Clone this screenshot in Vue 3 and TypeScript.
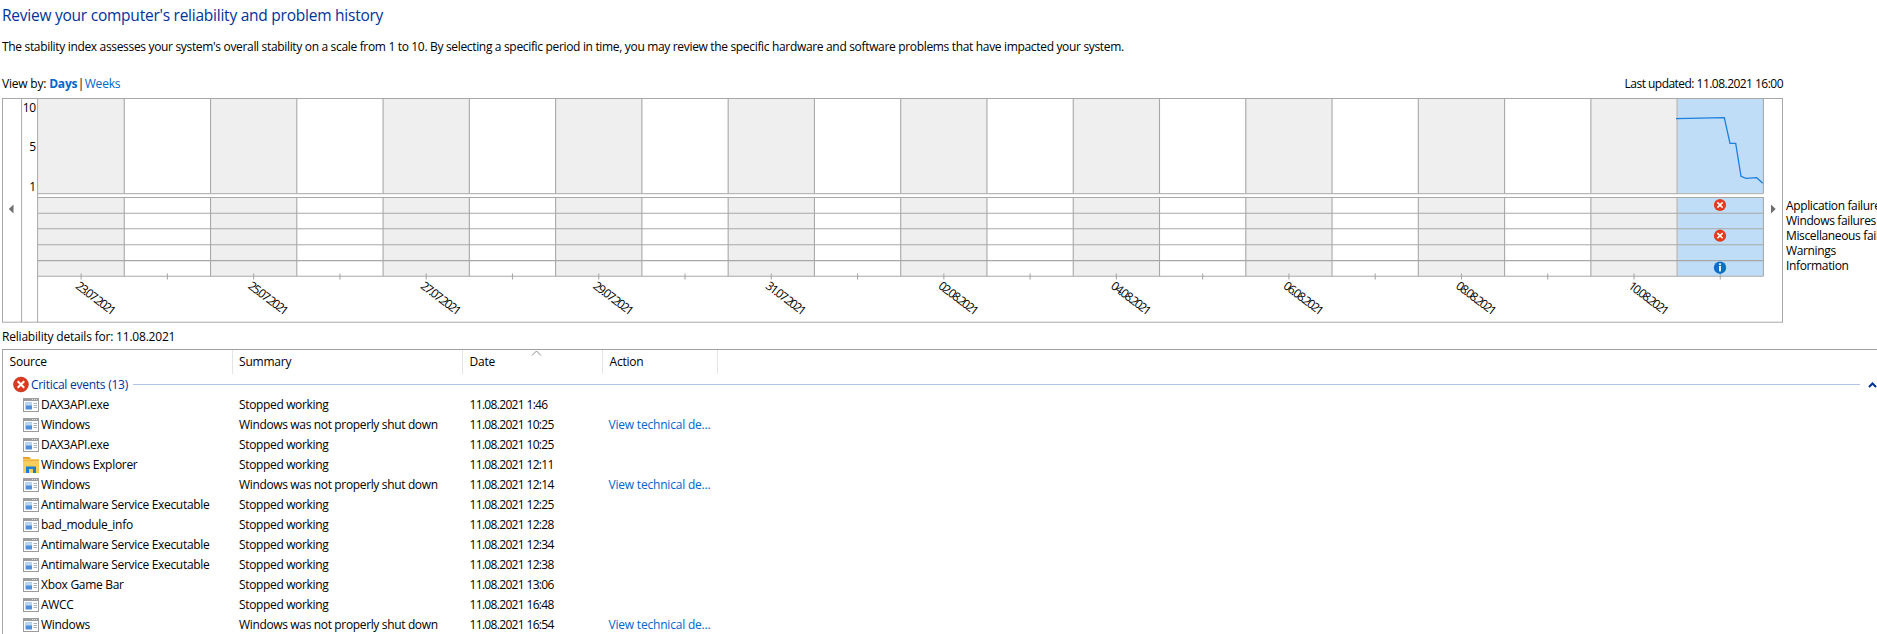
<script setup lang="ts">
const COL = 86.27
const X0 = 38
const columns = Array.from({ length: 20 }, (_, i) => ({ i, x: X0 + i * COL }))
const rowLines = [197.5, 213.3, 228.8, 244.7, 260.6, 276.2]
const ticks = columns.map((c) => c.x + COL / 2)
const dates = ['23.07.2021', '25.07.2021', '27.07.2021', '29.07.2021', '31.07.2021', '02.08.2021', '04.08.2021', '06.08.2021', '08.08.2021', '10.08.2021']
const dateLabels = dates.map((d, i) => ({ d, x: ticks[0] + 14 + i * 2 * COL, y: 298 }))
const stability = '1676,118.6 1724.3,117.6 1730,143.3 1735.7,143.3 1741,176.3 1746,178.4 1756.7,177.7 1762.7,183.3'
const legend = ['Application failures', 'Windows failures', 'Miscellaneous failures', 'Warnings', 'Information']
const shut = 'Windows was not properly shut down'
const stop = 'Stopped working'
const tech = 'View technical de...'
const rows = [
  { source: 'DAX3API.exe', summary: stop, date: '11.08.2021 1:46', action: '', kind: 'app' },
  { source: 'Windows', summary: shut, date: '11.08.2021 10:25', action: tech, kind: 'app' },
  { source: 'DAX3API.exe', summary: stop, date: '11.08.2021 10:25', action: '', kind: 'app' },
  { source: 'Windows Explorer', summary: stop, date: '11.08.2021 12:11', action: '', kind: 'folder' },
  { source: 'Windows', summary: shut, date: '11.08.2021 12:14', action: tech, kind: 'app' },
  { source: 'Antimalware Service Executable', summary: stop, date: '11.08.2021 12:25', action: '', kind: 'app' },
  { source: 'bad_module_info', summary: stop, date: '11.08.2021 12:28', action: '', kind: 'app' },
  { source: 'Antimalware Service Executable', summary: stop, date: '11.08.2021 12:34', action: '', kind: 'app' },
  { source: 'Antimalware Service Executable', summary: stop, date: '11.08.2021 12:38', action: '', kind: 'app' },
  { source: 'Xbox Game Bar', summary: stop, date: '11.08.2021 13:06', action: '', kind: 'app' },
  { source: 'AWCC', summary: stop, date: '11.08.2021 16:48', action: '', kind: 'app' },
  { source: 'Windows', summary: shut, date: '11.08.2021 16:54', action: tech, kind: 'app' },
]
</script>

<template>
  <div class="page">
    <h1 class="title">Review your computer's reliability and problem history</h1>
    <p class="desc">The stability index assesses your system's overall stability on a scale from 1 to 10. By selecting a specific period in time, you may review the specific hardware and software problems that have impacted your system.</p>
    <div class="viewbar">
      <span>View by: <b class="link">Days</b><span class="sep"> | </span><span class="link">Weeks</span></span>
      <span class="updated">Last updated: 11.08.2021 16:00</span>
    </div>

    <div class="chartrow">
      <svg class="chart" width="1784" height="227" viewBox="0 97 1784 227">
        <rect x="2.5" y="98.5" width="1780" height="223.7" fill="#fff" stroke="#a8a8a8" stroke-width="1" />
        <template v-for="c in columns" :key="c.i">
          <template v-if="c.i === 19">
            <rect :x="c.x + 0.8" y="99" :width="COL - 1" height="94" fill="#bfddf6" />
            <rect :x="c.x + 0.8" y="198" :width="COL - 1" height="78" fill="#bfddf6" />
          </template>
          <template v-else-if="c.i % 2 === 0">
            <rect :x="c.x" y="99" :width="COL" height="94" fill="#efefef" />
            <rect :x="c.x" y="198" :width="COL" height="78" fill="#efefef" />
          </template>
        </template>
        <line x1="21.6" x2="21.6" y1="98" y2="322" stroke="#a8a8a8" />
        <line x1="37.6" x2="37.6" y1="98" y2="322" stroke="#a8a8a8" />
        <template v-for="c in columns" :key="'v' + c.i">
          <line :x1="c.x + COL" :x2="c.x + COL" y1="99" y2="193.5" stroke="#a8a8a8" stroke-width="1.1" />
          <line :x1="c.x + COL" :x2="c.x + COL" y1="197" y2="276" stroke="#a8a8a8" stroke-width="1.1" />
        </template>
        <line x1="38" x2="1763.5" y1="193.7" y2="193.7" stroke="#a8a8a8" />
        <line v-for="y in rowLines" :key="y" x1="38" x2="1763.5" :y1="y" :y2="y" stroke="#a8a8a8" stroke-width="1.1" />
        <polyline :points="stability" fill="none" stroke="#1c7fdb" stroke-width="1.3" />
        <text class="axis" x="36" y="112" text-anchor="end">10</text>
        <text class="axis" x="36" y="151" text-anchor="end">5</text>
        <text class="axis" x="36" y="190.5" text-anchor="end">1</text>
        <polygon points="13.5,204.5 13.5,213.5 8.8,209" fill="#6f6f6f" />
        <polygon points="1771,204.5 1771,213.5 1775.7,209" fill="#6f6f6f" />
        <line v-for="t in ticks" :key="'t' + t" :x1="t" :x2="t" y1="273.5" y2="279.5" stroke="#a8a8a8" stroke-width="1.1" />
        <text v-for="l in dateLabels" :key="l.d" class="datelabel" text-anchor="middle" :transform="`translate(${l.x} ${l.y}) rotate(37)`" dy="4">{{ l.d }}</text>
        <g v-for="y in [205, 235.7]" :key="y">
          <circle cx="1720" :cy="y" r="6.1" fill="#e23b1e" />
          <path :d="`M1717.4 ${y - 2.6}L1722.6 ${y + 2.6}M1722.6 ${y - 2.6}L1717.4 ${y + 2.6}`" stroke="#fff" stroke-width="1.5" />
        </g>
        <circle cx="1720" cy="267.7" r="6.2" fill="#0b6fc6" />
        <rect x="1719.1" y="265.8" width="1.8" height="5.6" fill="#fff" />
        <rect x="1719.1" y="263.4" width="1.8" height="1.6" fill="#fff" />
      </svg>
      <div class="legend">
        <div v-for="l in legend" :key="l">{{ l }}</div>
      </div>
    </div>

    <div class="detailsfor">Reliability details for: 11.08.2021</div>

    <div class="table">
      <div class="grid head">
        <div class="hcell">Source</div>
        <div class="hcell">Summary</div>
        <div class="hcell">Date</div>
        <div class="hcell">Action</div>
      </div>
      <svg class="sort" width="11" height="6" viewBox="0 0 11 6"><path d="M1 5.5L5.5 1L10 5.5" fill="none" stroke="#8a8a8a" stroke-width="1" /></svg>

      <div class="group">
        <svg class="groupicon" width="17" height="17" viewBox="0 0 17 17">
          <circle cx="8.5" cy="8.5" r="8" fill="#dc3a20" />
          <circle cx="8.5" cy="8.5" r="7.9" fill="none" stroke="#b32a14" stroke-width="0.6" />
          <path d="M5 5L12 12M12 5L5 12" stroke="#fff" stroke-width="2.2" />
        </svg>
        <span class="grouptext">Critical events (13)</span>
        <span class="groupline"></span>
        <svg class="chev" width="9" height="6" viewBox="0 0 9 6"><path d="M1 5L4.5 1.5L8 5" fill="none" stroke="#003399" stroke-width="2" /></svg>
      </div>

      <div v-for="(r, i) in rows" :key="i" class="grid row">
        <div class="src">
          <svg v-if="r.kind === 'app'" class="ico" width="16" height="16" viewBox="0 0 16 16">
            <rect x="0" y="1" width="16" height="14" fill="#9c9c9c" />
            <rect x="1" y="4" width="14" height="10" fill="#fff" />
            <path d="M9 2.5H14.5" stroke="#e2e2e2" stroke-dasharray="1 1" />
            <rect x="2.5" y="5.5" width="6.5" height="7" fill="#4f8edb" />
            <rect x="2.5" y="5.5" width="6.5" height="3" fill="#bcd6f2" />
            <path d="M10.5 6.5H14M10.5 8.5H14M10.5 10.5H14" stroke="#a5b0bd" />
          </svg>
          <svg v-else class="ico" width="16" height="16" viewBox="0 0 16 16">
            <path d="M0 0H6L8 2H16V16H0Z" fill="#f9cd5c" />
            <path d="M0 0H6L8 2H0Z" fill="#e5a32f" />
            <rect x="0" y="3" width="16" height="1" fill="#eeb043" />
            <path d="M3 16V9.5H13V16H10V12H6V16Z" fill="#1b7fce" />
          </svg>
          <span>{{ r.source }}</span>
        </div>
        <div class="cell summary">{{ r.summary }}</div>
        <div class="cell date">{{ r.date }}</div>
        <div class="cell link action">{{ r.action }}</div>
      </div>
    </div>
  </div>
</template>

<style scoped>
.page {
  width: 1877px;
  height: 634px;
  overflow: hidden;
  background: #fff;
  color: #000;
  font-family: "Open Sans", "Noto Sans", sans-serif;
  font-size: 12px;
  letter-spacing: -0.2px;
}
.title {
  margin: 0;
  padding-left: 2px;
  font-size: 15.5px;
  font-weight: 400;
  line-height: 30px;
  letter-spacing: -0.24px;
  color: #003399;
}
.desc {
  margin: 0;
  padding-left: 2px;
  line-height: 34px;
  letter-spacing: -0.33px;
}
.viewbar {
  margin-top: 10px;
  height: 20px;
  width: 1783px;
  padding-left: 2px;
  box-sizing: border-box;
  line-height: 20px;
  display: flex;
  justify-content: space-between;
  margin-bottom: 3px;
}
.sep {
  word-spacing: -2.4px;
}
.updated {
  letter-spacing: -0.53px;
}
.link {
  color: #0066cc;
}
.chartrow {
  display: flex;
  width: 1877px;
  height: 227px;
  overflow: hidden;
}
.chart {
  flex: none;
  display: block;
}
.axis {
  font-size: 12px;
  fill: #000;
}
.datelabel {
  font-size: 12px;
  letter-spacing: -1.6px;
  fill: #000;
}
.legend {
  padding: 101px 0 0 2px;
  line-height: 15px;
  white-space: nowrap;
  letter-spacing: -0.36px;
}
.detailsfor {
  height: 25px;
  line-height: 25px;
  padding-left: 2px;
}
.table {
  position: relative;
  margin-left: 2px;
  border-left: 1px solid #a8a8a8;
  border-top: 1px solid #a0a0a0;
  height: 300px;
}
.grid {
  display: grid;
  grid-template-columns: 229.5px 230.5px 140px 115px;
}
.head {
  height: 24px;
}
.hcell {
  line-height: 23px;
  padding-left: 6.5px;
  border-right: 1px solid #e5e5e5;
  box-sizing: border-box;
}
.sort {
  position: absolute;
  left: 528px;
  top: 0;
}
.group {
  display: flex;
  align-items: center;
  height: 21px;
  padding-left: 10px;
}
.grouptext {
  margin-left: 2px;
  color: #003399;
  white-space: nowrap;
  letter-spacing: -0.25px;
}
.groupline {
  flex: none;
  width: 1727px;
  margin-left: 5px;
  height: 1px;
  background: #b4c4e8;
}
.chev {
  margin-left: 8px;
  flex: none;
}
.row {
  height: 20px;
  line-height: 20px;
  white-space: nowrap;
}
.src {
  display: flex;
  align-items: center;
  padding-left: 20px;
  letter-spacing: -0.3px;
}
.ico {
  flex: none;
  margin-right: 2px;
}
.cell {
  padding-left: 6.5px;
}
.action {
  padding-left: 5.5px;
}
.summary {
  letter-spacing: -0.35px;
}
.date {
  letter-spacing: -0.67px;
}
</style>

<style>
html, body {
  margin: 0;
  overflow: hidden;
  background: #fff;
}
</style>
